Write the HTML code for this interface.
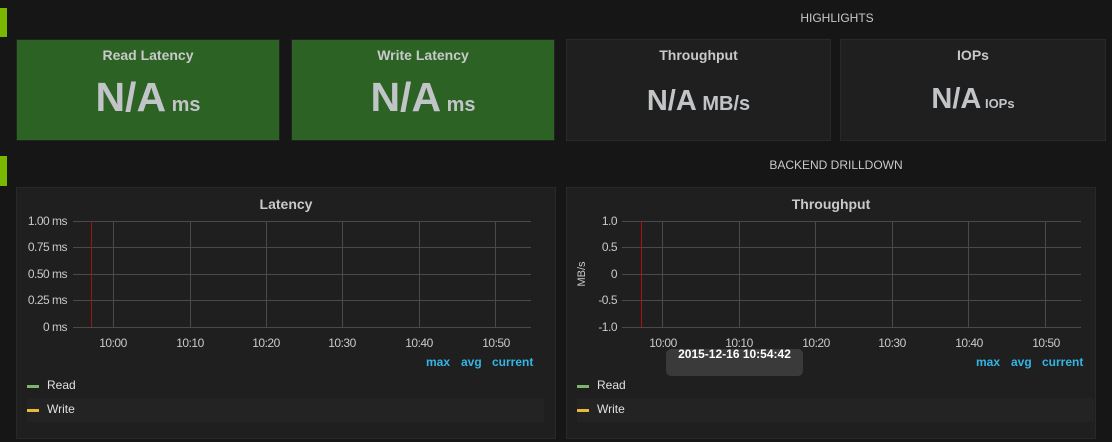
<!DOCTYPE html>
<html><head><meta charset="utf-8"><style>
*{margin:0;padding:0;box-sizing:border-box}
body{width:1112px;height:442px;background:#161616;font-family:"Liberation Sans",sans-serif;color:#c8c9ca;position:relative;overflow:hidden}
.a{position:absolute}
.bar{position:absolute;left:0;width:7px;background:#7ab800}
.hd{position:absolute;font-size:12px;color:#c8c9ca;text-align:center;width:300px}
.p{position:absolute;border:1px solid #292929;background:#1f1f1f}
.g{background:#2c6224;border-color:#222}
.t{position:absolute;left:0;right:0;text-align:center;font-weight:bold;font-size:14px;color:#c8c9ca}
.v{position:absolute;left:0;right:0;text-align:center;font-weight:bold;color:#c2c5c8;white-space:nowrap}
.yl{position:absolute;font-size:12px;color:#c8c9ca;text-align:right;width:60px;letter-spacing:-0.5px}
.xl{position:absolute;font-size:12px;color:#c8c9ca;width:40px;text-align:center;margin-left:-20px;letter-spacing:-0.5px}
.lg{position:absolute;font-size:12px;color:#e0e0e0}
.sw{position:absolute;width:12px;height:3px}
.m{position:absolute;font-size:12px;font-weight:bold;color:#33b5e5}
</style></head><body>
<div class="bar" style="top:8px;height:29px"></div>
<div class="bar" style="top:156px;height:30px"></div>
<div class="hd" style="left:687px;top:11px">HIGHLIGHTS</div>
<div class="hd" style="left:686px;top:158px">BACKEND DRILLDOWN</div>

<div class="p g" style="left:16px;top:39px;width:264px;height:102px"><div class="t" style="top:7px">Read Latency</div><div class="v" style="top:34px;font-size:41px">N/A<span style="font-size:20px"> ms</span></div></div>
<div class="p g" style="left:291px;top:39px;width:264px;height:102px"><div class="t" style="top:7px">Write Latency</div><div class="v" style="top:34px;font-size:41px">N/A<span style="font-size:20px"> ms</span></div></div>
<div class="p" style="left:566px;top:39px;width:265px;height:102px"><div class="t" style="top:7px">Throughput</div><div class="v" style="top:45px;font-size:29px">N/A<span style="font-size:20px"> MB/s</span></div></div>
<div class="p" style="left:840px;top:39px;width:266px;height:102px"><div class="t" style="top:7px">IOPs</div><div class="v" style="top:43px;font-size:29px">N/A<span style="font-size:13px"> IOPs</span></div></div>

<div class="p" style="left:16px;top:187px;width:540px;height:252px"><div class="t" style="top:8px">Latency</div></div>
<div class="p" style="left:566px;top:187px;width:530px;height:252px"><div class="t" style="top:8px">Throughput</div></div>

<svg class="a" style="left:0;top:0" width="1112" height="442">
<g stroke="#4a4a4a" stroke-width="1">
<line x1="73" x2="531" y1="221.5" y2="221.5"/><line x1="73" x2="531" y1="247.5" y2="247.5"/><line x1="73" x2="531" y1="274.5" y2="274.5"/><line x1="73" x2="531" y1="300.5" y2="300.5"/><line x1="73" x2="531" y1="327.5" y2="327.5"/>
<line x1="113.5" x2="113.5" y1="221" y2="327"/><line x1="190.5" x2="190.5" y1="221" y2="327"/><line x1="266.5" x2="266.5" y1="221" y2="327"/><line x1="342.5" x2="342.5" y1="221" y2="327"/><line x1="419.5" x2="419.5" y1="221" y2="327"/><line x1="495.5" x2="495.5" y1="221" y2="327"/>
<line x1="622" x2="1081" y1="221.5" y2="221.5"/><line x1="622" x2="1081" y1="247.5" y2="247.5"/><line x1="622" x2="1081" y1="274.5" y2="274.5"/><line x1="622" x2="1081" y1="300.5" y2="300.5"/><line x1="622" x2="1081" y1="327.5" y2="327.5"/>
<line x1="662.5" x2="662.5" y1="221" y2="327"/><line x1="739.5" x2="739.5" y1="221" y2="327"/><line x1="815.5" x2="815.5" y1="221" y2="327"/><line x1="892.5" x2="892.5" y1="221" y2="327"/><line x1="968.5" x2="968.5" y1="221" y2="327"/><line x1="1045.5" x2="1045.5" y1="221" y2="327"/>
</g>
<line x1="91.5" x2="91.5" y1="221" y2="327" stroke="#9a1515"/>
<line x1="641.5" x2="641.5" y1="221" y2="327" stroke="#b01010"/>
<text x="585" y="274" transform="rotate(-90 585 274)" font-family="Liberation Sans" font-size="11" fill="#c8c9ca" text-anchor="middle">MB/s</text>
</svg>

<div class="yl" style="left:7px;top:214px">1.00 ms</div>
<div class="yl" style="left:7px;top:240px">0.75 ms</div>
<div class="yl" style="left:7px;top:267px">0.50 ms</div>
<div class="yl" style="left:7px;top:293px">0.25 ms</div>
<div class="yl" style="left:7px;top:320px">0 ms</div>
<div class="xl" style="left:113px;top:336px">10:00</div><div class="xl" style="left:190px;top:336px">10:10</div><div class="xl" style="left:266px;top:336px">10:20</div><div class="xl" style="left:342px;top:336px">10:30</div><div class="xl" style="left:419px;top:336px">10:40</div><div class="xl" style="left:496px;top:336px">10:50</div>

<div class="yl" style="left:557px;top:214px">1.0</div>
<div class="yl" style="left:557px;top:240px">0.5</div>
<div class="yl" style="left:557px;top:267px">0</div>
<div class="yl" style="left:557px;top:293px">-0.5</div>
<div class="yl" style="left:557px;top:320px">-1.0</div>
<div class="xl" style="left:663px;top:336px">10:00</div><div class="xl" style="left:739px;top:336px">10:10</div><div class="xl" style="left:816px;top:336px">10:20</div><div class="xl" style="left:892px;top:336px">10:30</div><div class="xl" style="left:969px;top:336px">10:40</div><div class="xl" style="left:1046px;top:336px">10:50</div>

<div class="m" style="left:426px;top:355px">max</div><div class="m" style="left:461px;top:355px">avg</div><div class="m" style="left:492px;top:355px">current</div>
<div class="m" style="left:976px;top:355px">max</div><div class="m" style="left:1011px;top:355px">avg</div><div class="m" style="left:1042px;top:355px">current</div>

<div class="a" style="left:27px;top:398px;width:517px;height:24px;background:#232323"></div>
<div class="a" style="left:577px;top:398px;width:517px;height:24px;background:#232323"></div>
<div class="sw" style="left:27px;top:385px;background:#7eb26d"></div><div class="lg" style="left:47px;top:378px">Read</div>
<div class="sw" style="left:27px;top:409px;background:#eab839"></div><div class="lg" style="left:47px;top:402px">Write</div>
<div class="sw" style="left:577px;top:385px;background:#7eb26d"></div><div class="lg" style="left:597px;top:378px">Read</div>
<div class="sw" style="left:577px;top:409px;background:#eab839"></div><div class="lg" style="left:597px;top:402px">Write</div>

<div class="a" style="left:666px;top:349px;width:137px;height:27px;background:#3a3a3a;border-radius:5px;color:#fff;font-weight:bold;font-size:12px;text-align:center;line-height:11px;padding-top:0"></div>
<div class="a" style="left:666px;top:347px;width:137px;color:#fff;font-weight:bold;font-size:12px;text-align:center;line-height:14px;padding-top:0">2015-12-16 10:54:42</div>
</body></html>
